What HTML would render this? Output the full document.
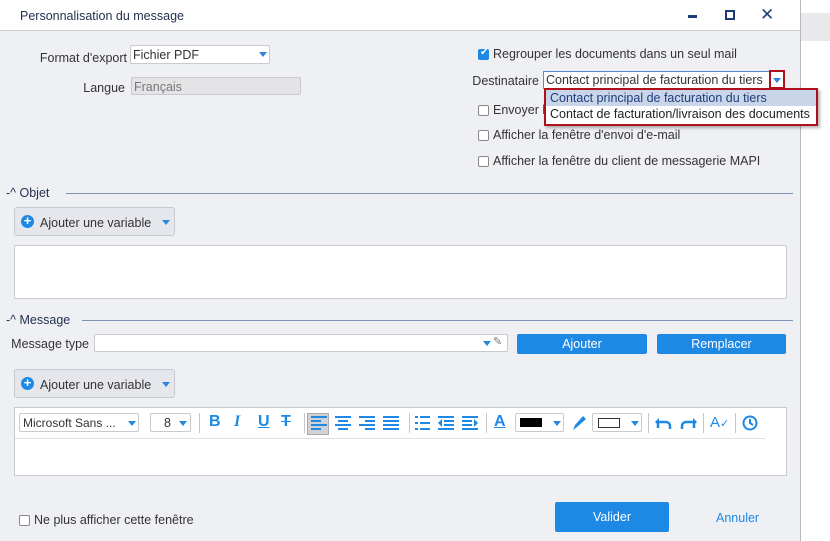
<!DOCTYPE html>
<html><head><meta charset="utf-8"><style>
*{box-sizing:border-box;margin:0;padding:0}
body{width:830px;height:541px;position:relative;overflow:hidden;background:#fff;font-family:"Liberation Sans",sans-serif;font-size:12.5px;color:#333}
.a{position:absolute;white-space:nowrap}
.r{position:absolute;white-space:nowrap;text-align:right}
#dlg{position:absolute;left:0;top:0;width:801px;height:541px;background:#eff0f4;border-right:1px solid #b8b8c0}
#title{position:absolute;left:0;top:0;width:800px;height:31px;background:#fff;border-bottom:1px solid #cfd0d6}
.inp{position:absolute;background:#fff;border:1px solid #c9cad0;border-radius:2px}
.tri{position:absolute;width:0;height:0;border-left:4px solid transparent;border-right:4px solid transparent;border-top:5px solid #2a86dc}
.cb{position:absolute;width:11px;height:11px;border:1px solid #888;background:#fff;border-radius:2px}
.btn{position:absolute;background:#1e88e5;color:#fff;text-align:center;border-radius:2px;font-size:12.5px}
.var{position:absolute;width:161px;height:29px;background:#e6e7ec;border:1px solid #c8c9cf;border-radius:3px}
.plus{position:absolute;left:6px;top:7px;width:13px;height:13px;border-radius:50%;background:#1e88e5;color:#fff;font-size:13px;line-height:12px;text-align:center;font-weight:bold}
.sec{position:absolute;height:1px;background:#7d93b5}
.ti{position:absolute;color:#1e88e5;font-weight:bold;font-size:16px}
.sep{position:absolute;top:413px;width:1px;height:20px;background:#c8c8c8}
</style></head><body>
<div style="position:absolute;left:801px;top:13px;width:29px;height:28px;background:#e9e9ec"></div>
<div id="dlg">
<div id="title">
<span class="a" style="left:20px;top:9px;color:#24324f;font-size:12.5px">Personnalisation du message</span>
<div class="a" style="left:688px;top:15px;width:9px;height:3px;background:#1d3d78"></div>
<div class="a" style="left:725px;top:10px;width:10px;height:10px;border:2px solid #1d3d78"></div>
<span class="a" style="left:760px;top:5px;font-size:17px;color:#1d3d78">✕</span>
</div>
<span class="r" style="right:673px;top:51px">Format d'export</span>
<div class="inp" style="left:130px;top:45px;width:140px;height:19px"><span class="a" style="left:2px;top:2px">Fichier PDF</span><div class="tri" style="left:128px;top:6px"></div></div>
<span class="r" style="right:675px;top:81px">Langue</span>
<div class="inp" style="left:131px;top:77px;width:170px;height:18px;background:#e4e4e6"><span class="a" style="left:2px;top:2px;color:#777">Français</span></div>

<div class="cb" style="left:478px;top:49px;background:#1e88e5;border-color:#1e88e5"><span class="a" style="left:1px;top:-3px;color:#fff;font-size:10px">✔</span></div>
<span class="a" style="left:493px;top:47px">Regrouper les documents dans un seul mail</span>
<span class="r" style="right:261px;top:74px">Destinataire</span>
<div class="inp" style="left:543px;top:71px;width:240px;height:18px;border-color:#5a8ad0;border-radius:0;overflow:hidden"><span class="a" style="left:2px;top:1px;font-size:12.5px">Contact principal de facturation du tiers</span></div>
<div class="a" style="left:769px;top:70px;width:16px;height:19px;border:2px solid #b0101a;background:#fff"><div class="tri" style="left:2px;top:6px"></div></div>
<div class="cb" style="left:478px;top:105px"></div>
<span class="a" style="left:493px;top:103px">Envoyer l</span>
<div class="a" style="left:544px;top:88px;width:274px;height:38px;border:2px solid #b0101a;background:#fff;box-shadow:2px 2px 3px rgba(0,0,0,.3);overflow:hidden">
<div class="a" style="left:0;top:0;width:270px;height:16px;background:#c9d6ea"></div>
<span class="a" style="left:4px;top:1px;color:#1f3d7a;font-size:12.5px">Contact principal de facturation du tiers</span>
<span class="a" style="left:4px;top:17px;font-size:12.5px;color:#222">Contact de facturation/livraison des documents</span>
</div>
<div class="cb" style="left:478px;top:130px"></div>
<span class="a" style="left:493px;top:128px">Afficher la fenêtre d'envoi d'e-mail</span>
<div class="cb" style="left:478px;top:156px"></div>
<span class="a" style="left:493px;top:154px">Afficher la fenêtre du client de messagerie MAPI</span>

<span class="a" style="left:6px;top:186px;color:#24324f">-^ Objet</span>
<div class="sec" style="left:66px;top:193px;width:727px"></div>
<div class="var" style="left:14px;top:207px"><div class="plus">+</div><span class="a" style="left:25px;top:8px">Ajouter une variable</span><div class="tri" style="left:147px;top:12px"></div></div>
<div class="inp" style="left:14px;top:245px;width:773px;height:54px"></div>

<span class="a" style="left:6px;top:313px;color:#24324f">-^ Message</span>
<div class="sec" style="left:82px;top:320px;width:711px"></div>
<span class="r" style="right:711px;top:337px">Message type</span>
<div class="inp" style="left:94px;top:334px;width:414px;height:18px"><div class="tri" style="left:388px;top:6px"></div><span class="a" style="left:398px;top:0px;color:#777;font-size:11px">✎</span></div>
<div class="btn" style="left:517px;top:334px;width:130px;height:20px;line-height:20px">Ajouter</div>
<div class="btn" style="left:657px;top:334px;width:129px;height:20px;line-height:20px">Remplacer</div>
<div class="var" style="left:14px;top:369px"><div class="plus">+</div><span class="a" style="left:25px;top:8px">Ajouter une variable</span><div class="tri" style="left:147px;top:12px"></div></div>

<div class="inp" style="left:14px;top:407px;width:773px;height:69px;border-radius:0">
<div class="a" style="left:0;top:30px;width:750px;height:1px;background:#e0e0e4"></div>
</div>
<div class="inp" style="left:19px;top:413px;width:120px;height:19px;overflow:hidden"><span class="a" style="left:3px;top:2px;font-size:12px">Microsoft Sans ...</span><div class="tri" style="left:108px;top:7px"></div></div>
<div class="inp" style="left:150px;top:413px;width:41px;height:19px"><span class="a" style="left:13px;top:2px">8</span><div class="tri" style="left:28px;top:7px"></div></div>
<div class="sep" style="left:199px"></div>
<span class="ti" style="left:209px;top:413px">B</span>
<span class="ti" style="left:234px;top:413px;font-style:italic;font-family:'Liberation Serif',serif">I</span>
<span class="ti" style="left:258px;top:413px;text-decoration:underline">U</span>
<span class="ti" style="left:281px;top:413px;text-decoration:line-through">T</span>
<div class="sep" style="left:304px"></div>
<div class="a" style="left:307px;top:413px;width:22px;height:22px;background:#d2d2d6;border:1px solid #aaa"></div>
<svg class="a" style="left:310px;top:415px" width="110" height="18" viewBox="0 0 110 18" fill="#1e88e5">
<rect x="1" y="1" width="16" height="2"/><rect x="1" y="5" width="10" height="2"/><rect x="1" y="9" width="16" height="2"/><rect x="1" y="13" width="10" height="2"/>
<rect x="25" y="1" width="16" height="2"/><rect x="28" y="5" width="10" height="2"/><rect x="25" y="9" width="16" height="2"/><rect x="28" y="13" width="10" height="2"/>
<rect x="49" y="1" width="16" height="2"/><rect x="55" y="5" width="10" height="2"/><rect x="49" y="9" width="16" height="2"/><rect x="55" y="13" width="10" height="2"/>
<rect x="73" y="1" width="16" height="2"/><rect x="73" y="5" width="16" height="2"/><rect x="73" y="9" width="16" height="2"/><rect x="73" y="13" width="16" height="2"/>
</svg>
<div class="sep" style="left:409px"></div>
<svg class="a" style="left:414px;top:415px" width="70" height="18" viewBox="0 0 70 18" fill="#1e88e5">
<rect x="1" y="1" width="3" height="2"/><rect x="6" y="1" width="10" height="2"/><rect x="1" y="7" width="3" height="2"/><rect x="6" y="7" width="10" height="2"/><rect x="1" y="13" width="3" height="2"/><rect x="6" y="13" width="10" height="2"/>
<rect x="24" y="1" width="16" height="2"/><rect x="30" y="5" width="10" height="2"/><rect x="30" y="9" width="10" height="2"/><rect x="24" y="13" width="16" height="2"/><path d="M28 4v8l-4-4z"/>
<rect x="48" y="1" width="16" height="2"/><rect x="48" y="5" width="10" height="2"/><rect x="48" y="9" width="10" height="2"/><rect x="48" y="13" width="16" height="2"/><path d="M60 4v8l4-4z"/>
</svg>
<div class="sep" style="left:486px"></div>
<span class="ti" style="left:494px;top:413px;text-decoration:underline">A</span>
<div class="inp" style="left:515px;top:413px;width:49px;height:19px"><div class="a" style="left:4px;top:4px;width:22px;height:9px;background:#000"></div><div class="tri" style="left:37px;top:7px"></div></div>
<svg class="a" style="left:570px;top:414px" width="18" height="18"><path d="M3 16l2-5 8-9 3 3-9 8z" fill="#1e88e5"/></svg>
<div class="inp" style="left:592px;top:413px;width:50px;height:19px"><div class="a" style="left:5px;top:4px;width:22px;height:10px;border:1px solid #333"></div><div class="tri" style="left:38px;top:7px"></div></div>
<div class="sep" style="left:648px"></div>
<svg class="a" style="left:654px;top:414px" width="44" height="18" fill="none" stroke="#1e88e5" stroke-width="2.5"><path d="M4 14v-6h8a4 4 0 0 1 4 4v3"/><path d="M40 14v-6h-8a4 4 0 0 0-4 4v3"/><path d="M1 8l4-4v8z M43 8l-4-4v8z" fill="#1e88e5" stroke="none"/></svg>
<div class="sep" style="left:703px"></div>
<span class="a" style="left:710px;top:414px;color:#1e88e5;font-size:15px">A<span style="font-size:11px">✓</span></span>
<div class="sep" style="left:735px"></div>
<svg class="a" style="left:741px;top:414px" width="18" height="18" fill="none" stroke="#1e88e5" stroke-width="2"><circle cx="9" cy="9" r="6.5"/><path d="M9 5v4l3 2"/></svg>

<div class="cb" style="left:19px;top:515px"></div>
<span class="a" style="left:34px;top:513px">Ne plus afficher cette fenêtre</span>
<div class="btn" style="left:555px;top:502px;width:114px;height:30px;line-height:30px">Valider</div>
<span class="a" style="left:716px;top:511px;color:#1e88e5">Annuler</span>
</div>
</body></html>
